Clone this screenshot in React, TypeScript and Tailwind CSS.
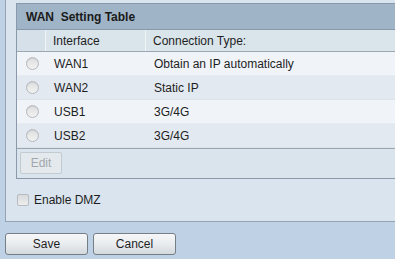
import React from "react";

const rows = [
  { name: "WAN1", type: "Obtain an IP automatically" },
  { name: "WAN2", type: "Static IP" },
  { name: "USB1", type: "3G/4G" },
  { name: "USB2", type: "3G/4G" },
];

function Radio() {
  return (
    <span className="block w-[13px] h-[13px] rounded-full border border-[#b4b8bc] bg-gradient-to-b from-[#dedfe0] to-[#f2f2f2] shadow-[inset_0_1px_1px_rgba(0,0,0,0.08)]" />
  );
}

export default function App() {
  return (
    <div
      className="w-[395px] h-[259px] overflow-hidden bg-[#bfd1e5] text-[12px] text-[#1e1e1e]"
      style={{ fontFamily: '"Liberation Sans", Arial, sans-serif' }}
    >
      <div className="ml-[5px] w-[430px] h-[222px] border-l border-b border-[#95a3b0] bg-[#d9e4ee] pt-[3px] pl-[10px]">
        <div className="w-[420px] border border-[#8a9aab]">
          <div className="h-[26px] flex items-center pl-[9px] bg-[#9fb4c6] border-b border-[#8799aa] font-bold text-[12px] text-[#1a1a1a]">
            WAN&nbsp; Setting Table
          </div>
          <div className="h-[22px] flex bg-[#d9e4eb] border-b border-[#9ba7b2]">
            <div className="w-[29px] bg-[#d6e0e8] border-r border-[#f2f5f8]" />
            <div className="w-[100px] flex items-center pl-[7px] border-r border-[#f2f5f8]">Interface</div>
            <div className="flex-1 flex items-center pl-[7px]">Connection Type:</div>
          </div>
          {rows.map((r, i) => (
            <div
              key={r.name}
              className={
                "h-[24px] flex items-center " +
                (i % 2 === 0 ? "bg-[#f0f4f9] border-b border-[#e6ebf1]" : "bg-[#e3e9f0] border-b border-[#dbe2ea]")
              }
            >
              <div className="w-[30px] flex justify-center pl-[1px]">
                <Radio />
              </div>
              <div className="w-[100px] pl-[7px]">{r.name}</div>
              <div className="flex-1 pl-[7px]">{r.type}</div>
            </div>
          ))}
          <div className="h-[30px] border-t border-[#9aa6b1] bg-[#d9e4ec] pl-[3px] pt-[3px]">
            <div className="w-[42px] h-[22px] flex items-center justify-center rounded-[2px] border border-[#c3cbd2] bg-[#e4e9ee] text-[#a3a7ab]">
              Edit
            </div>
          </div>
        </div>
        <div className="flex items-center mt-[12px] ml-[1px]">
          <span className="block w-[12px] h-[12px] rounded-[2px] border border-[#b8bcc0] bg-gradient-to-b from-[#d7d9db] to-[#eeeeee]" />
          <span className="ml-[5px]">Enable DMZ</span>
        </div>
      </div>
      <div className="flex gap-[5px] ml-[5px] mt-[11px]">
        <button className="w-[83px] h-[22px] rounded-[3px] border border-[#777f86] bg-gradient-to-b from-[#f6f7f8] via-[#e9ecef] to-[#d3d9de] text-[12px] text-[#1e1e1e]">
          Save
        </button>
        <button className="w-[83px] h-[22px] rounded-[3px] border border-[#777f86] bg-gradient-to-b from-[#f6f7f8] via-[#e9ecef] to-[#d3d9de] text-[12px] text-[#1e1e1e]">
          Cancel
        </button>
      </div>
    </div>
  );
}
